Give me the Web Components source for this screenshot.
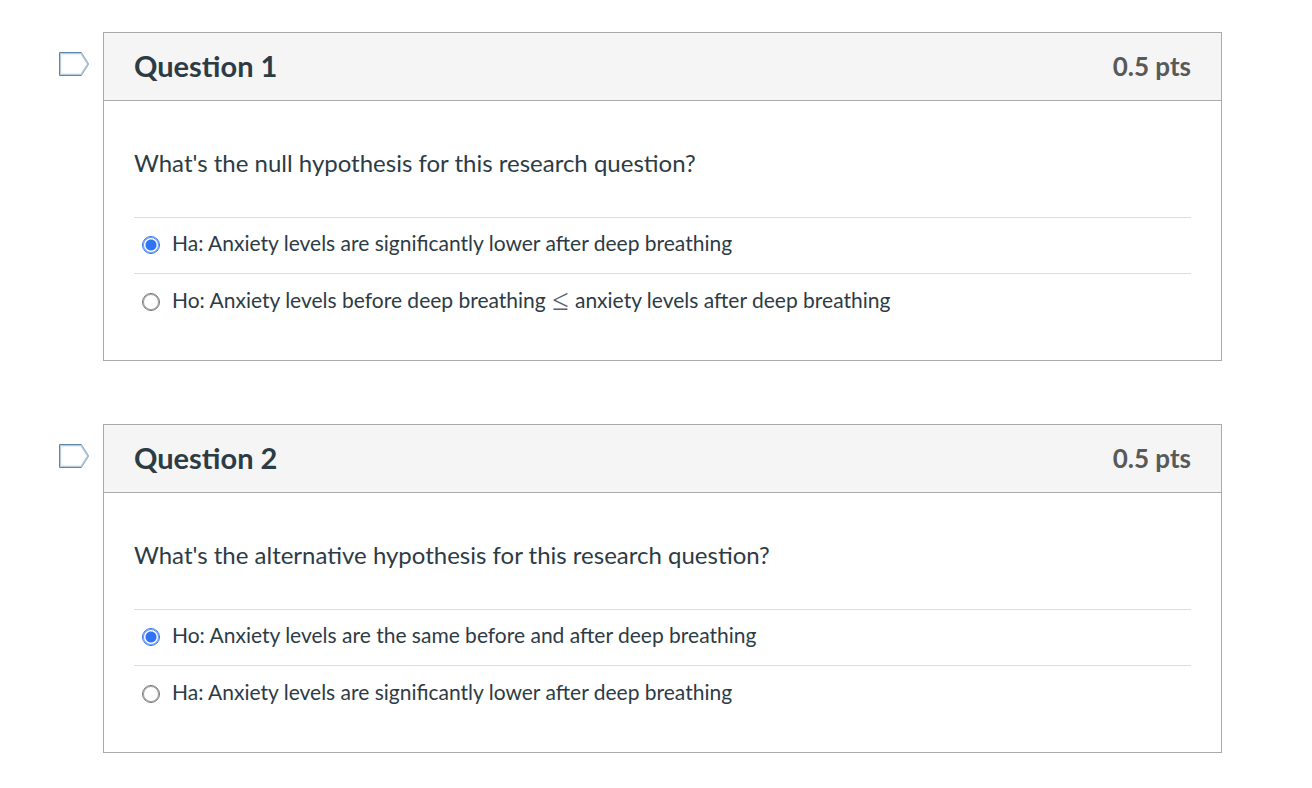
<!DOCTYPE html>
<html lang="en">
<head>
<meta charset="utf-8">
<title>Quiz</title>
<style>
body { margin: 0; background: #fff; color: #2d3b45; font-family: Lato, "Liberation Sans", sans-serif; }
</style>
</head>
<body>
<quiz-page>
  <quiz-question name="Question 1" points="0.5 pts">
    <span slot="prompt">What's the null hypothesis for this research question?</span>
    <quiz-answers group="q1">
      <p data-checked>Ha: Anxiety levels are significantly lower after deep breathing</p>
      <p>Ho: Anxiety levels before deep breathing <math-sign>≤</math-sign> anxiety levels after deep breathing</p>
    </quiz-answers>
  </quiz-question>
  <quiz-question name="Question 2" points="0.5 pts">
    <span slot="prompt">What's the alternative hypothesis for this research question?</span>
    <quiz-answers group="q2">
      <p data-checked>Ho: Anxiety levels are the same before and after deep breathing</p>
      <p>Ha: Anxiety levels are significantly lower after deep breathing</p>
    </quiz-answers>
  </quiz-question>
</quiz-page>
<script>
customElements.define('math-sign', class extends HTMLElement {
  constructor() {
    super();
    this.attachShadow({ mode: 'open' }).innerHTML = `
      <style>
        :host { display: inline-block; margin: 0 1px; font: 30px/20px "Liberation Serif", serif; vertical-align: -2px; height: 20px; color: #55626b; }
      </style>
      <slot></slot>`;
  }
});

customElements.define('quiz-page', class extends HTMLElement {
  constructor() {
    super();
    this.attachShadow({ mode: 'open' }).innerHTML = `
      <style>
        :host { display: flex; flex-direction: column; gap: 63px; padding: 32px 90px 32px 58px; }
      </style>
      <slot></slot>`;
  }
});

customElements.define('quiz-question', class extends HTMLElement {
  connectedCallback() {
    this.attachShadow({ mode: 'open' }).innerHTML = `
      <style>
        :host { display: flex; align-items: flex-start; gap: 13px; }
        .flag { appearance: none; border: 0; background: none; padding: 0; margin: 19px 0 0; line-height: 0; cursor: pointer; }
        .card { flex: 1; border: 1px solid #aaa; box-sizing: border-box; min-width: 0; }
        header { display: flex; align-items: center; justify-content: space-between; padding: 15px 30px 16px; background: #f5f5f5; border-bottom: 1px solid #aaa; }
        h2 { margin: 0; font-size: 29px; line-height: 36px; font-weight: 700; }
        .points { font-size: 26px; line-height: 36px; font-weight: 700; color: #595959; }
        .body { padding: 44px 30px 30px; }
        .prompt { font-size: 24px; line-height: 36px; margin-bottom: 36px; }
      </style>
      <button class="flag" type="button" aria-label="Flag this question">
        <svg width="32" height="26" viewBox="0 0 32 26" fill="none">
          <path d="M2.5 2.5H23L29.8 13L23 23.5H2.5Z" stroke="#b9ccda" stroke-width="1.4"/>
          <path d="M23.5 1.5L30.6 13L23.5 24.5" stroke="#8fabc0"/>
          <path d="M23.5 1.5H1.5V24.5H23.5" stroke="#5f87a3"/>
        </svg>
      </button>
      <section class="card">
        <header><h2></h2><span class="points"></span></header>
        <div class="body">
          <div class="prompt"><slot name="prompt"></slot></div>
          <slot></slot>
        </div>
      </section>`;
    this.shadowRoot.querySelector('h2').textContent = this.getAttribute('name');
    this.shadowRoot.querySelector('.points').textContent = this.getAttribute('points');
  }
});

customElements.define('quiz-answers', class extends HTMLElement {
  connectedCallback() {
    const root = this.attachShadow({ mode: 'open' });
    root.innerHTML = `
      <style>
        :host { display: block; }
        .answer { display: flex; align-items: center; gap: 12px; padding: 10px 8px 15px; border-top: 1px solid #ddd; font-size: 21px; line-height: 30px; }
        .answer:last-child { padding-top: 11px; }
        input { appearance: none; box-sizing: border-box; flex: none; width: 18px; height: 18px; margin: 4px 0 0; border: 1px solid #767676; border-radius: 50%; background: #fff; box-shadow: inset 0 0 0 1px #a4a4a4; }
        input:checked { border-color: #2f74f5; background: radial-gradient(circle, #2f74f5 5px, #fff 6px); box-shadow: inset 0 0 0 1px #6f9ff8; }
        ::slotted(p) { margin: 0; }
      </style>`;
    [...this.children].forEach((item, i) => {
      item.slot = 'answer' + i;
      const row = document.createElement('label');
      row.className = 'answer';
      const radio = document.createElement('input');
      radio.type = 'radio';
      radio.name = this.getAttribute('group');
      radio.checked = item.hasAttribute('data-checked');
      const slot = document.createElement('slot');
      slot.name = item.slot;
      row.append(radio, slot);
      root.append(row);
    });
  }
});
</script>
</body>
</html>
